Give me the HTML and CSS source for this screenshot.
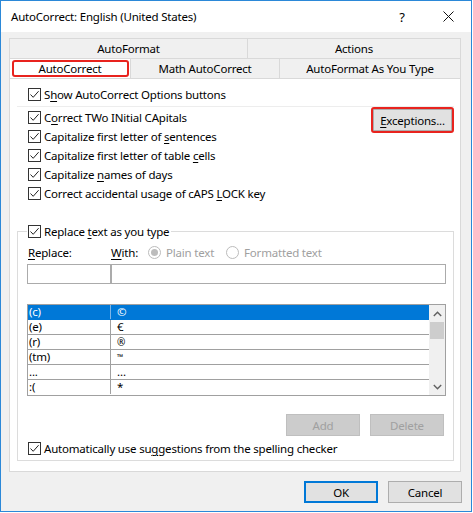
FILE: index.html
```html
<!DOCTYPE html>
<html>
<head>
<meta charset="utf-8">
<link rel="stylesheet" href="styles.css">
</head>
<body>
<div class="window">
  <div class="titlebar">
    <span class="title">AutoCorrect: English (United States)</span>
    <span class="help">?</span>
    <span class="close"><svg width="11" height="11" viewBox="0 0 11 11"><path d="M0.5 0.5 L10.5 10.5 M10.5 0.5 L0.5 10.5" stroke="#111" stroke-width="1" fill="none"/></svg></span>
  </div>
  <div class="client">
    <div class="tabs">
      <div class="tabrow">
        <div class="tab t-autoformat">AutoFormat</div>
        <div class="tab t-fill t-last">Actions</div>
      </div>
      <div class="tabrow">
        <div class="tab t-autocorrect selected"><span class="mark">AutoCorrect</span></div>
        <div class="tab t-math">Math AutoCorrect</div>
        <div class="tab t-fill t-last">AutoFormat As You Type</div>
      </div>
    </div>
    <div class="panel">
      <div class="crow">
        <span class="cb"><svg width="11" height="11" viewBox="0 0 11 11"><path d="M1.5 5.5 L4.2 8.3 L9.6 2.2" stroke="#222" stroke-width="1" fill="none"/></svg></span>
        <span>S<u>h</u>ow AutoCorrect Options buttons</span>
      </div>
      <div class="sep"></div>
      <div class="crow split">
        <div class="crow-l">
          <span class="cb"><svg width="11" height="11" viewBox="0 0 11 11"><path d="M1.5 5.5 L4.2 8.3 L9.6 2.2" stroke="#222" stroke-width="1" fill="none"/></svg></span>
          <span>C<u>o</u>rrect TWo INitial CApitals</span>
        </div>
        <button class="btn exc"><u>E</u>xceptions...</button>
      </div>
      <div class="crow">
        <span class="cb"><svg width="11" height="11" viewBox="0 0 11 11"><path d="M1.5 5.5 L4.2 8.3 L9.6 2.2" stroke="#222" stroke-width="1" fill="none"/></svg></span>
        <span>Capitalize first letter of <u>s</u>entences</span>
      </div>
      <div class="crow">
        <span class="cb"><svg width="11" height="11" viewBox="0 0 11 11"><path d="M1.5 5.5 L4.2 8.3 L9.6 2.2" stroke="#222" stroke-width="1" fill="none"/></svg></span>
        <span>Capitalize first letter of table <u>c</u>ells</span>
      </div>
      <div class="crow">
        <span class="cb"><svg width="11" height="11" viewBox="0 0 11 11"><path d="M1.5 5.5 L4.2 8.3 L9.6 2.2" stroke="#222" stroke-width="1" fill="none"/></svg></span>
        <span>Capitalize <u>n</u>ames of days</span>
      </div>
      <div class="crow">
        <span class="cb"><svg width="11" height="11" viewBox="0 0 11 11"><path d="M1.5 5.5 L4.2 8.3 L9.6 2.2" stroke="#222" stroke-width="1" fill="none"/></svg></span>
        <span>Correct accidental usage of cAPS <u>L</u>OCK key</span>
      </div>

      <fieldset class="group">
        <legend class="crow legend">
          <span class="cb"><svg width="11" height="11" viewBox="0 0 11 11"><path d="M1.5 5.5 L4.2 8.3 L9.6 2.2" stroke="#222" stroke-width="1" fill="none"/></svg></span>
          <span>Replace <u>t</u>ext as you type</span>
        </legend>
        <div class="labels">
          <span class="lbl-replace"><u>R</u>eplace:</span>
          <span class="lbl-with"><u>W</u>ith:</span>
          <span class="radio checked"></span>
          <span class="dis">Plain text</span>
          <span class="radio r2"></span>
          <span class="dis">Formatted text</span>
        </div>
        <div class="inputs">
          <div class="inp inp-r"></div>
          <div class="inp inp-w"></div>
        </div>
        <div class="list">
          <div class="rows">
            <div class="row sel"><span class="c1">(c)</span><span class="c2">©</span></div>
            <div class="row"><span class="c1">(e)</span><span class="c2">€</span></div>
            <div class="row"><span class="c1">(r)</span><span class="c2 small">®</span></div>
            <div class="row"><span class="c1">(tm)</span><span class="c2 tiny">™</span></div>
            <div class="row"><span class="c1">...</span><span class="c2">…</span></div>
            <div class="row"><span class="c1">:(</span><span class="c2">*</span></div>
          </div>
          <div class="sbar">
            <div class="arrow"><svg width="9" height="6" viewBox="0 0 9 6"><path d="M0.8 5 L4.5 1.3 L8.2 5" stroke="#606060" stroke-width="1.4" fill="none"/></svg></div>
            <div class="thumb"></div>
            <div class="track"></div>
            <div class="arrow"><svg width="9" height="6" viewBox="0 0 9 6"><path d="M0.8 1 L4.5 4.7 L8.2 1" stroke="#606060" stroke-width="1.4" fill="none"/></svg></div>
          </div>
        </div>
        <div class="actions">
          <button class="btn disabled">Add</button>
          <button class="btn disabled">Delete</button>
        </div>
        <div class="crow inner">
          <span class="cb"><svg width="11" height="11" viewBox="0 0 11 11"><path d="M1.5 5.5 L4.2 8.3 L9.6 2.2" stroke="#222" stroke-width="1" fill="none"/></svg></span>
          <span>Automatically use su<u>g</u>gestions from the spelling checker</span>
        </div>
      </fieldset>
    </div>
    <div class="footer">
      <button class="btn ok">OK</button>
      <button class="btn">Cancel</button>
    </div>
  </div>
</div>
</body>
</html>
```

FILE: styles.css
```css
* { box-sizing: border-box; }
html, body { margin: 0; padding: 0; background: #ffffff; }
body {
  font-family: "Noto Sans", "Open Sans", sans-serif;
  font-size: 11.5px;
  letter-spacing: -0.2px;
  color: #000;
}
u { text-decoration: underline; text-underline-offset: 2px; }

.window {
  width: 472px;
  height: 512px;
  border: 1px solid #2b88d8;
  background: #f0f0f0;
  display: flex;
  flex-direction: column;
}

.titlebar {
  height: 31px;
  background: #ffffff;
  display: flex;
  align-items: center;
  padding-left: 10px;
  flex: none;
}
.title { flex: 1; }
.help { width: 20px; text-align: center; margin-right: 31px; font-size: 13px; }
.close { width: 11px; height: 11px; margin-right: 17px; display: flex; }

.client {
  flex: 1;
  padding: 6px 10px 0 8px;
  display: flex;
  flex-direction: column;
}
.client > * { flex-shrink: 0; }

.tabrow { display: flex; height: 20px; }
.tab {
  border-top: 1px solid #d9d9d9;
  border-left: 1px solid #d9d9d9;
  background: #f0f0f0;
  display: flex;
  align-items: center;
  justify-content: center;
  height: 20px;
}
.t-last { border-right: 1px solid #d9d9d9; }
.t-fill { flex: 1; }
.t-autoformat { width: 238px; }
.t-autocorrect { width: 121px; }
.t-math { width: 149px; }
.tab.selected {
  background: #ffffff;
  position: relative;
}
.mark::before {
  content: "";
  position: absolute;
  left: 2px; right: 1px; top: 1px; bottom: 1px;
  border: 2px solid #e8231e;
  border-radius: 3px;
}

.panel {
  background: #ffffff;
  border: 1px solid #d9d9d9;
  height: 394px;
  padding: 6px 6px 9px 7px;
  display: flex;
  flex-direction: column;
}
.panel > * { flex-shrink: 0; }

.crow {
  height: 19px;
  display: flex;
  align-items: center;
  margin-left: 11px;
  white-space: nowrap;
}
.crow.inner { margin-left: 1px; }
.crow-l { display: flex; align-items: center; }
.crow.split { justify-content: space-between; align-items: flex-start; }
.crow.split .crow-l { height: 19px; }
.cb {
  width: 13px;
  height: 13px;
  border: 1px solid #333333;
  background: #fff;
  margin-right: 3px;
  display: flex;
  flex: none;
}
.sep {
  height: 1px;
  background: #ededed;
  margin: 2px 0 1px 0;
}

.btn {
  font-family: inherit;
  font-size: 11.5px;
  letter-spacing: -0.2px;
  color: #000;
  width: 74px;
  height: 22px;
  background: #e1e1e1;
  border: 1px solid #adadad;
  border-radius: 0;
  padding: 0;
  margin: 0;
}
.exc {
  width: 79px;
  margin-top: 1px;
  margin-right: 2px;
  position: relative;
}
.exc::after {
  content: "";
  position: absolute;
  left: -3px; right: -3px; top: -3px; bottom: -3px;
  border: 2px solid #e8231e;
  border-radius: 3px;
}

.group {
  margin: 19px 0 0 0;
  padding: 0 7px 2px 9px;
  border: 1px solid #dcdcdc;
  min-width: 0;
}
.legend.crow {
  margin-left: 0;
  padding: 0 2px 0 1px;
}

.labels {
  height: 19px;
  margin-top: 2px;
  display: flex;
  align-items: center;
  white-space: nowrap;
}
.lbl-replace { width: 84px; padding-left: 1px; }
.lbl-with { width: 37px; }
.radio {
  width: 13px;
  height: 13px;
  border-radius: 50%;
  border: 1px solid #bcbcbc;
  background: #fff;
  margin-right: 5px;
  position: relative;
  flex: none;
}
.radio.checked::after {
  content: "";
  position: absolute;
  left: 2px; top: 2px; width: 7px; height: 7px;
  border-radius: 50%;
  background: #bcbcbc;
}
.r2 { margin-left: 12px; }
.dis { color: #a0a0a0; }

.inputs {
  display: flex;
  margin-top: 2px;
  height: 20px;
}
.inp { border: 1px solid #ababab; background: #fff; height: 20px; }
.inp-r { width: 84px; }
.inp-w { flex: 1; }

.list {
  margin-top: 20px;
  height: 92px;
  border: 1px solid #a0a0a0;
  display: flex;
  background: #fff;
}
.rows { flex: 1; }
.row {
  height: 15px;
  display: flex;
  border-bottom: 1px solid #a0a0a0;
  line-height: 14px;
  overflow: hidden;
}
.row:last-child { border-bottom: none; }
.c1, .c2 { display: block; height: 14px; line-height: 14px; overflow: hidden; }
.c1 {
  width: 83px;
  border-right: 1px solid #a0a0a0;
  padding-left: 1px;
}
.c2 { flex: 1; padding-left: 6px; }
.small { font-size: 10px; }
.tiny { font-size: 8px; }
.row.sel { background: #0078d7; color: #fff; border-bottom-color: #0078d7; }
.row.sel .c1 { border-right-color: #7fb5e6; }

.sbar {
  width: 16px;
  background: #f0f0f0;
  display: flex;
  flex-direction: column;
}
.arrow {
  height: 17px;
  display: flex;
  align-items: center;
  justify-content: center;
}
.thumb {
  height: 17px;
  margin: 0 1px;
  background: #cdcdcd;
}
.track { flex: 1; }

.actions {
  margin-top: 18px;
  display: flex;
  justify-content: flex-end;
  gap: 10px;
  padding-right: 2px;
  margin-bottom: 3px;
}
.btn.disabled {
  background: #cccccc;
  border-color: #bfbfbf;
  color: #a0a0a0;
}

.footer {
  display: flex;
  justify-content: flex-end;
  gap: 10px;
  margin-top: 9px;
  margin-right: -1px;
}
.btn.ok { border: 2px solid #0078d7; }
```
